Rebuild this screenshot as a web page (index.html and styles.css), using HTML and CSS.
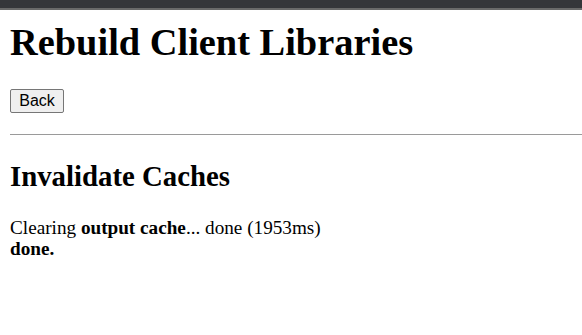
FILE: index.html
```html
<!DOCTYPE html>
<html>
<head>
    <title>Rebuild Client Libraries</title>
    <meta charset="utf-8">
    <link rel="stylesheet" href="styles.css">
</head>
<body>
    <div class="topbar"></div>

    <main class="page">
        <h1>Rebuild Client Libraries</h1>
        <form class="back-form">
            <button type="button" class="back">Back</button>
        </form>
        <hr>
        <h2>Invalidate Caches</h2>
        <p class="log">
            Clearing <strong>output cache</strong>... done (1953ms)<br>
            <strong>done.</strong>
        </p>
    </main>
</body>
</html>
```

FILE: styles.css
```css
body {
    margin: 0;
    background-color: white;
    font-family: "Liberation Serif", "Times New Roman", serif;
    font-size: 19.2px;
    color: black;
}

.topbar {
    height: 8px;
    background-color: #35363a;
    border-bottom: 2px solid #6a6a6a;
}

.page {
    padding-left: 10px;
}

h1 {
    font-size: 38.4px;
    margin: 10px 0 25px;
}

.back-form {
    margin: 0;
}

.back {
    font-family: "Liberation Sans", Arial, sans-serif;
    font-size: 16px;
    width: 54px;
    height: 24px;
    padding: 0 7px;
    background-color: #efefef;
    border: 1px solid #767676;
    border-radius: 2px;
    color: black;
}

hr {
    margin: 21px 0 0;
    border: none;
    border-top: 1px solid #9a9a9a;
}

h2 {
    font-size: 28.8px;
    margin: 25px 0 24px;
}

.log {
    margin: 0;
    line-height: 21px;
}
```
